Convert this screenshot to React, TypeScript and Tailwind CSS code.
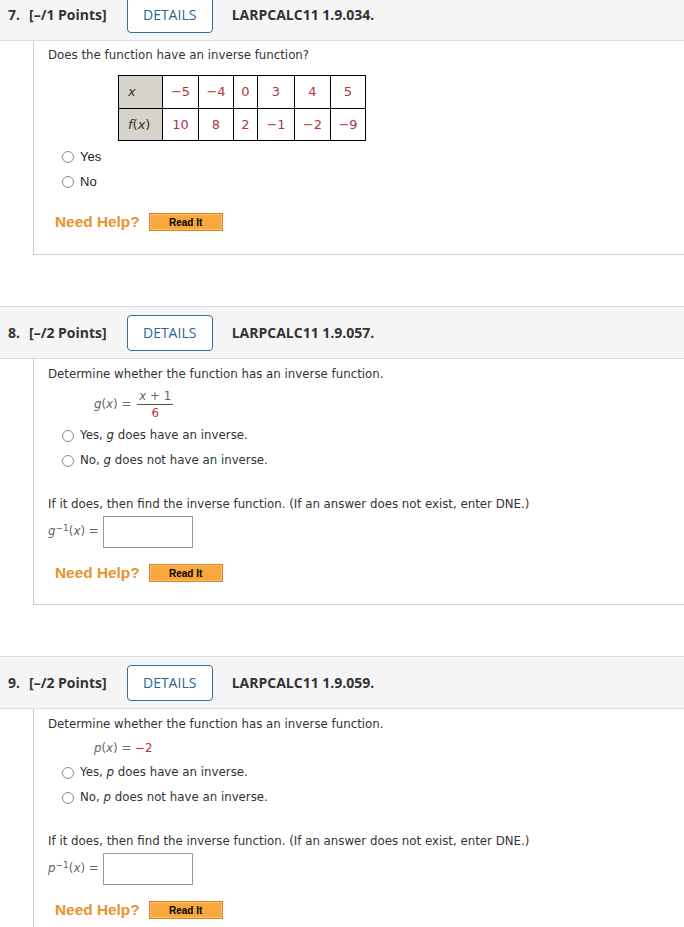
import React from "react";

const verdana = "font-['Verdana','DejaVu_Sans',sans-serif]";
const arial = "font-['Liberation_Sans',Arial,sans-serif]";
const open = "font-['Open_Sans',sans-serif]";

function Header({ num, points, code, className = "" }: { num: string; points: string; code: string; className?: string }) {
  return (
    <div
      className={`flex h-[53px] items-center border-y border-[#dcdcdc] bg-[#f5f5f5] pl-[8px] text-[14px] font-bold text-[#333] ${open} ${className}`}
    >
      <span className="w-[21px]">{num}</span>
      <span>{points}</span>
      <button className="ml-[20px] flex h-[36px] w-[86px] items-center justify-center rounded-[4px] border border-[#3a6d8c] bg-white text-[14px] font-normal text-[#2a6496]">
        DETAILS
      </button>
      <span className="ml-[19px]">{code}</span>
    </div>
  );
}

function Radio({ children, className = "" }: { children: React.ReactNode; className?: string }) {
  return (
    <div className={`flex items-center gap-[6px] ${className}`}>
      <span className="h-[12px] w-[12px] rounded-full border border-[#8a8a8a] bg-white" />
      <span>{children}</span>
    </div>
  );
}

function Help({ className = "" }: { className?: string }) {
  return (
    <div className={`flex h-[18px] items-center pl-[7px] ${className}`}>
      <span className={`text-[15.4px] font-bold text-[#e9922e] ${arial}`}>Need Help?</span>
      <button
        className={`ml-[9px] flex h-[18px] w-[74px] items-center justify-center border border-[#d9822b] bg-[#f8a73c] text-[10px] font-bold text-black shadow-[inset_0_0_0_1px_#fbc06a] ${arial}`}
      >
        Read It
      </button>
    </div>
  );
}

const red = "text-[#b3343f]";

function ValueTable() {
  const xs = ["\u22125", "\u22124", "0", "3", "4", "5"];
  const fs = ["10", "8", "2", "\u22121", "\u22122", "\u22129"];
  const widths = ["w-[36px]", "w-[35px]", "w-[24px]", "w-[37px]", "w-[36px]", "w-[35px]"];
  return (
    <table className={`ml-[70px] mt-[12px] w-[248px] table-fixed border-collapse text-[13px] ${verdana}`}>
      <tbody>
        <tr className="h-[33px]">
          <td className="w-[44px] border border-black bg-[#d6d3cb] pl-[9px] italic text-[#333]">x</td>
          {xs.map((v, i) => (
            <td key={i} className={`${widths[i]} border border-black text-center ${red}`}>
              {v}
            </td>
          ))}
        </tr>
        <tr className="h-[32px]">
          <td className="border border-black bg-[#d6d3cb] pl-[9px] text-[#333]">
            <i>f</i>(<i>x</i>)
          </td>
          {fs.map((v, i) => (
            <td key={i} className={`border border-black text-center ${red}`}>
              {v}
            </td>
          ))}
        </tr>
      </tbody>
    </table>
  );
}

function Content({ children, className = "" }: { children: React.ReactNode; className?: string }) {
  return (
    <div className={`ml-[33px] border-b border-l border-[#cfcfcf] pl-[14px] text-[11.8px] text-[#333] ${verdana} ${className}`}>
      {children}
    </div>
  );
}

function InverseRow({ fn }: { fn: string }) {
  return (
    <>
      <p className="mt-[23px] leading-[16px]">If it does, then find the inverse function. (If an answer does not exist, enter DNE.)</p>
      <div className="mt-[4px] flex h-[32px] items-center">
        <span className="text-[#666]">
          <i>{fn}</i>
          <sup className="text-[9px]">{"\u22121"}</sup>(<i>x</i>) =
        </span>
        <span className="ml-[4px] h-[32px] w-[90px] border border-[#999] bg-white" />
      </div>
    </>
  );
}

export default function App() {
  return (
    <div className="min-h-[927px] overflow-hidden bg-white">
      {/* question 7 */}
      <Header num="7." points="[–/1 Points]" code="LARPCALC11 1.9.034." className="-mt-[12px]" />
      <Content className="h-[214px] pt-[6px]">
        <p className="leading-[16px]">Does the function have an inverse function?</p>
        <ValueTable />
        <div className={`ml-[14px] mt-[3px] text-[13px] text-[#222] ${arial}`}>
          <Radio className="h-[25px]">Yes</Radio>
          <Radio className="h-[25px]">No</Radio>
        </div>
        <Help className="mt-[19px]" />
      </Content>

      {/* question 8 */}
      <Header num="8." points="[–/2 Points]" code="LARPCALC11 1.9.057." className="mt-[51px]" />
      <Content className="h-[246px] pt-[7px]">
        <p className="leading-[16px]">Determine whether the function has an inverse function.</p>
        <div className="ml-[46px] mt-[6px] flex items-center text-[#666]">
          <span>
            <i>g</i>(<i>x</i>) =
          </span>
          <span className="ml-[6px] inline-flex flex-col items-center">
            <span className="border-b border-[#555] px-[2px] leading-[16px]">
              <i>x</i> + 1
            </span>
            <span className={`leading-[16px] ${red}`}>6</span>
          </span>
        </div>
        <div className="ml-[14px] mt-[2px]">
          <Radio className="h-[25px]">
            Yes, <i>g</i> does have an inverse.
          </Radio>
          <Radio className="h-[25px]">
            No, <i>g</i> does not have an inverse.
          </Radio>
        </div>
        <InverseRow fn="g" />
        <Help className="mt-[16px]" />
      </Content>

      {/* question 9 */}
      <Header num="9." points="[–/2 Points]" code="LARPCALC11 1.9.059." className="mt-[51px]" />
      <Content className="h-[240px] pt-[7px]">
        <p className="leading-[16px]">Determine whether the function has an inverse function.</p>
        <div className="ml-[46px] mt-[8px] leading-[16px] text-[#666]">
          <i>p</i>(<i>x</i>) = <span className={red}>{"\u22122"}</span>
        </div>
        <div className="ml-[14px] mt-[4px]">
          <Radio className="h-[25px]">
            Yes, <i>p</i> does have an inverse.
          </Radio>
          <Radio className="h-[25px]">
            No, <i>p</i> does not have an inverse.
          </Radio>
        </div>
        <InverseRow fn="p" />
        <Help className="mt-[16px]" />
      </Content>
    </div>
  );
}
